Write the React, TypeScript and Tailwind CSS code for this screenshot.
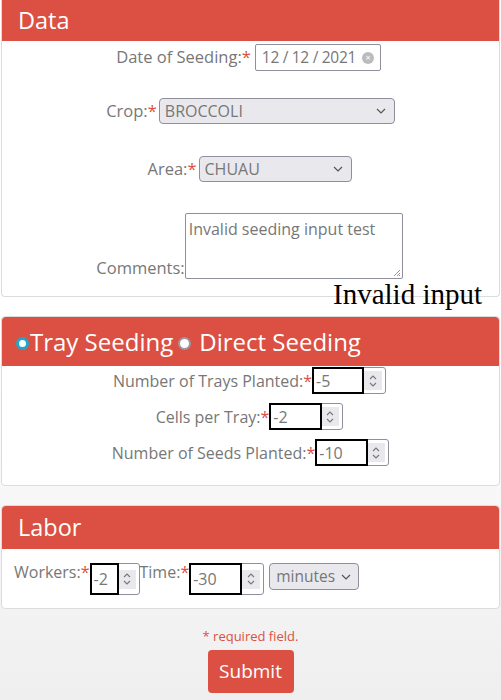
import React from 'react';

const RED = 'bg-[#db5042]';

function Star() {
  return <span className="text-[#db5042]">*</span>;
}

function Chevron() {
  return (
    <svg width="10" height="6" viewBox="0 0 10 6" className="text-[#555]">
      <path d="M1 1l4 4 4-4" fill="none" stroke="currentColor" strokeWidth="1.2" />
    </svg>
  );
}

function Spinner() {
  return (
    <span className="flex h-[19px] w-[18px] flex-col items-center justify-center gap-[2px] bg-[#e9e9ed]">
      <svg width="8" height="5" viewBox="0 0 8 5">
        <path d="M1 4l3-3 3 3" fill="none" stroke="#777" strokeWidth="1.1" />
      </svg>
      <svg width="8" height="5" viewBox="0 0 8 5">
        <path d="M1 1l3 3 3-3" fill="none" stroke="#777" strokeWidth="1.1" />
      </svg>
    </span>
  );
}

function NumberBox({ value, width, box, height = 'h-[27px]' }: { value: string; width: string; box: string; height?: string }) {
  return (
    <span className={`inline-flex shrink-0 items-center justify-between rounded-[3px] border border-[#8f8f9d] bg-white pr-[3px] ${width} ${height}`}>
      <span className={`-my-px -ml-px flex h-[calc(100%+2px)] items-center border-2 border-black pl-[2px] text-[#777] ${box}`}>
        {value}
      </span>
      <Spinner />
    </span>
  );
}

function Select({ value, width }: { value: string; width: string }) {
  return (
    <span className={`inline-flex h-[26px] items-center justify-between rounded-[4px] border border-[#8f8f9d] bg-[#e9e9ed] pl-[5px] pr-[8px] text-[16px] text-[#777] ${width}`}>
      {value}
      <Chevron />
    </span>
  );
}

function Header({ children, tall }: { children: React.ReactNode; tall?: boolean }) {
  return (
    <div className={`${RED} flex items-center rounded-t-[4px] px-[16px] text-[23.5px] text-white ${tall ? 'h-[49px]' : 'h-[43px]'}`}>
      {children}
    </div>
  );
}

export default function App() {
  return (
    <div
      className="min-h-[700px] bg-gradient-to-b from-white from-45% to-[#efefef] pb-[7px] text-[16px] text-[#777]"
      style={{ fontFamily: '"Open Sans", "Noto Sans", sans-serif' }}
    >
      <div className="relative mx-px rounded-b-[4px] border border-t-0 border-[#dcdcdc] bg-white text-[16.5px]">
        <div className={`${RED} flex h-[41px] items-center px-[16px] text-[23.5px] text-white`}>Data</div>
        <div className="flex flex-col items-center pb-[17px] pt-[3px]">
          <div className="flex h-[27px] items-center gap-[4px] pr-[4px]">
            <span>
              Date of Seeding:<Star />
            </span>
            <span className="flex h-[27px] w-[126px] items-center justify-between whitespace-nowrap rounded-[2px] border border-[#8f8f9d] pl-[6px] pr-[6px] text-[15.5px] tracking-[-0.3px] text-[#777]">
              12 / 12 / 2021
              <span className="flex h-[12px] w-[12px] items-center justify-center rounded-full bg-[#bbb] text-[9px] leading-none text-white">
                ×
              </span>
            </span>
          </div>
          <div className="mt-[27px] flex h-[26px] items-center gap-[2px]">
            <span>
              Crop:<Star />
            </span>
            <Select value="BROCCOLI" width="w-[236px]" />
          </div>
          <div className="mt-[32px] flex h-[26px] items-center gap-[2px] pr-[2px]">
            <span>
              Area:<Star />
            </span>
            <Select value="CHUAU" width="w-[153px]" />
          </div>
          <div className="mt-[31px] flex items-end pr-[2px]">
            <span className="mb-[-2px]">Comments:</span>
            <span className="relative h-[66px] w-[218px] rounded-[2px] border border-[#8f8f9d] px-[3px] pt-[3px] text-left text-[16px] leading-[1.5]">
              Invalid seeding input test
              <svg width="8" height="8" viewBox="0 0 8 8" className="absolute bottom-[1px] right-[1px]">
                <path d="M7 1L1 7M7 4L4 7M7 6L6 7" stroke="#888" strokeWidth="0.9" />
              </svg>
            </span>
          </div>
        </div>
        <span
          className="absolute right-[17px] top-[277px] text-[29px] leading-[1.2] text-black"
          style={{ fontFamily: '"Liberation Serif", serif' }}
        >
          Invalid input
        </span>
      </div>

      <div className="mx-px mt-[19px] rounded-[4px] border border-[#dcdcdc] bg-white">
        <Header tall>
          <span className="-ml-[2px] flex items-center">
            <span className="mr-[1px] mt-[3px] h-[13px] w-[13px] rounded-full border-[3px] border-[#1ba9cb] bg-white" />
            <span className="text-[24px]">Tray Seeding</span>
            <span className="ml-[5px] mr-[8px] mt-[3px] h-[13px] w-[13px] rounded-full border-[2px] border-[#9a9aa6] bg-white" />
            <span className="text-[24px]">Direct Seeding</span>
          </span>
        </Header>
        <div className="flex flex-col items-center gap-[9px] pb-[19px] pt-[1px]">
          <div className="flex h-[27px] items-center pr-[2px]">
            <span>
              Number of Trays Planted:<Star />
            </span>
            <NumberBox value="-5" width="w-[74px]" box="w-[52px]" />
          </div>
          <div className="flex h-[27px] items-center pr-[2px]">
            <span>
              Cells per Tray:<Star />
            </span>
            <NumberBox value="-2" width="w-[74px]" box="w-[53px]" />
          </div>
          <div className="flex h-[27px] items-center">
            <span>
              Number of Seeds Planted:<Star />
            </span>
            <NumberBox value="-10" width="w-[74px]" box="w-[53px]" />
          </div>
        </div>
      </div>

      <div className="mx-px mt-[19px] rounded-[4px] border border-[#dcdcdc] bg-white">
        <Header>Labor</Header>
        <div className="flex items-start px-[12px] pb-[13px] pt-[14px]">
          <span className="mt-[-2px] leading-[1.4]">
            Workers:<Star />
          </span>
          <NumberBox value="-2" width="w-[50px]" box="w-[31px]" height="h-[32px]" />
          <span className="mt-[-2px] leading-[1.4]">
            Time:<Star />
          </span>
          <NumberBox value="-30" width="w-[75px]" box="w-[53px]" height="h-[32px]" />
          <span className="ml-[5px] inline-flex h-[27px] items-center gap-[6px] rounded-[4px] border border-[#8f8f9d] bg-[#e9e9ed] pl-[6px] pr-[7px] text-[15.5px] text-[#777]">
            minutes
            <Chevron />
          </span>
        </div>
      </div>

      <div className="mt-[18px] flex flex-col items-center">
        <span className="text-[13px] text-[#db5042]">* required field.</span>
        <button className={`${RED} mt-[3px] h-[43px] w-[86px] rounded-[4px] text-[19px] text-white`}>Submit</button>
      </div>
    </div>
  );
}
